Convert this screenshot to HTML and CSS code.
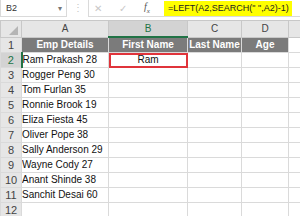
FILE: index.html
```html
<!DOCTYPE html>
<html lang="en">
<head>
    <meta charset="UTF-8">
    <title>Excel</title>
    <link rel="stylesheet" href="styles.css">
</head>
<body>

<div class="formula-row">
    <div class="name-box">
        <span>B2</span>
        <span class="caret">&#9662;</span>
    </div>
    <div class="dots">&#8942;</div>
    <div class="formula-bar">
        <span class="fb-icon">&#10005;</span>
        <span class="fb-icon">&#10003;</span>
        <span class="fx">f<sub>x</sub></span>
        <span class="formula">=LEFT(A2,SEARCH(" ",A2)-1)</span>
    </div>
</div>

<table class="sheet">
    <colgroup>
        <col class="c-head">
        <col class="c-a">
        <col class="c-b">
        <col class="c-c">
        <col class="c-d">
        <col>
    </colgroup>
    <tr class="col-heads">
        <th class="corner"><span class="tri"></span></th>
        <th>A</th>
        <th class="active">B</th>
        <th>C</th>
        <th>D</th>
        <th></th>
    </tr>
    <tr>
        <th class="rn">1</th>
        <td class="hd">Emp Details</td>
        <td class="hd">First Name</td>
        <td class="hd">Last Name</td>
        <td class="hd last">Age</td>
        <td></td>
    </tr>
    <tr>
        <th class="rn active">2</th>
        <td class="dt">Ram Prakash 28</td>
        <td class="dt sel">Ram</td>
        <td class="dt"></td>
        <td class="dt last"></td>
        <td></td>
    </tr>
    <tr><th class="rn">3</th><td class="dt">Rogger Peng 30</td><td class="dt"></td><td class="dt"></td><td class="dt last"></td><td></td></tr>
    <tr><th class="rn">4</th><td class="dt">Tom Furlan 35</td><td class="dt"></td><td class="dt"></td><td class="dt last"></td><td></td></tr>
    <tr><th class="rn">5</th><td class="dt">Ronnie Brook 19</td><td class="dt"></td><td class="dt"></td><td class="dt last"></td><td></td></tr>
    <tr><th class="rn">6</th><td class="dt">Eliza Fiesta 45</td><td class="dt"></td><td class="dt"></td><td class="dt last"></td><td></td></tr>
    <tr><th class="rn">7</th><td class="dt">Oliver Pope 38</td><td class="dt"></td><td class="dt"></td><td class="dt last"></td><td></td></tr>
    <tr><th class="rn">8</th><td class="dt">Sally Anderson 29</td><td class="dt"></td><td class="dt"></td><td class="dt last"></td><td></td></tr>
    <tr><th class="rn">9</th><td class="dt">Wayne Cody 27</td><td class="dt"></td><td class="dt"></td><td class="dt last"></td><td></td></tr>
    <tr><th class="rn">10</th><td class="dt">Anant Shinde 38</td><td class="dt"></td><td class="dt"></td><td class="dt last"></td><td></td></tr>
    <tr><th class="rn">11</th><td class="dt">Sanchit Desai 60</td><td class="dt"></td><td class="dt"></td><td class="dt last"></td><td></td></tr>
    <tr><th class="rn">12</th><td></td><td></td><td></td><td></td><td></td></tr>
</table>

</body>
</html>
```

FILE: styles.css
```css
/* Excel look */
body {
    margin: 0;
    width: 300px;
    height: 216px;
    overflow: hidden;
    background: #ffffff;
    font-family: "Liberation Sans", Arial, sans-serif;
}
.formula-row {
    display: flex;
    align-items: flex-start;
    height: 20px;
    background: #ffffff;
}
.name-box {
    display: flex;
    justify-content: space-between;
    align-items: center;
    box-sizing: border-box;
    width: 67px;
    height: 17px;
    padding: 0 4px 0 5px;
    border: 1px solid #dadada;
    border-top: none;
    font-size: 9px;
    color: #333;
}
.caret {
    font-size: 8px;
    color: #777;
}
.dots {
    width: 21px;
    text-align: center;
    font-size: 10px;
    line-height: 15px;
    color: #c6c6c6;
}
.formula-bar {
    flex: 1;
    display: flex;
    align-items: center;
    box-sizing: border-box;
    height: 17px;
    border: 1px solid #dadada;
    border-top: none;
    border-right: none;
    padding-left: 5px;
}
.fb-icon {
    width: 25px;
    font-size: 10px;
    color: #c8c8c8;
}
.fx {
    font-family: "Liberation Serif", serif;
    font-style: italic;
    font-size: 10px;
    color: #555;
    width: 20px;
}
.fx sub {
    font-size: 7px;
}
.formula {
    background: #ffff00;
    font-size: 9px;
    line-height: 11px;
    color: #222;
    padding: 2px 3px 2px 4px;
}
.sheet {
    border-collapse: collapse;
    table-layout: fixed;
    width: 310px;
    font-size: 10px;
    line-height: 12px;
}
.c-head { width: 21px; }
.c-a { width: 87px; }
.c-b { width: 79px; }
.c-c { width: 54px; }
.c-d { width: 47px; }
.sheet td, .sheet th {
    height: 14px;
    padding: 0;
    border: 1px solid #dadada;
    white-space: nowrap;
    overflow: hidden;
}
.col-heads th {
    height: 15px;
    background: #e6e6e6;
    border-color: #c8c8c8;
    font-weight: normal;
    color: #444;
    text-align: center;
}
.col-heads th.active {
    background: #d3d3d3;
    color: #217346;
    border-bottom: 2px solid #217346;
}
.corner {
    position: relative;
}
.tri {
    position: absolute;
    right: 3px;
    bottom: 2px;
    width: 0;
    height: 0;
    border-left: 9px solid transparent;
    border-bottom: 9px solid #b5b5b5;
}
.rn {
    background: #e6e6e6;
    border-color: #c8c8c8;
    font-weight: normal;
    font-size: 11px;
    color: #444;
    text-align: center;
}
.rn.active {
    background: #d3d3d3;
    color: #217346;
    border-right: 2px solid #217346;
}
.hd {
    background: #7b7b7b;
    color: #ffffff;
    font-weight: bold;
    text-align: center;
    border: 1px solid #555;
}
.dt {
    color: #111;
    padding-left: 3px;
    border: 1px solid #555;
}
.last {
    border-right-color: #a0a0a0;
}
.sel {
    text-align: center;
    outline: 2px solid #e0343b;
    outline-offset: -2px;
}
```
